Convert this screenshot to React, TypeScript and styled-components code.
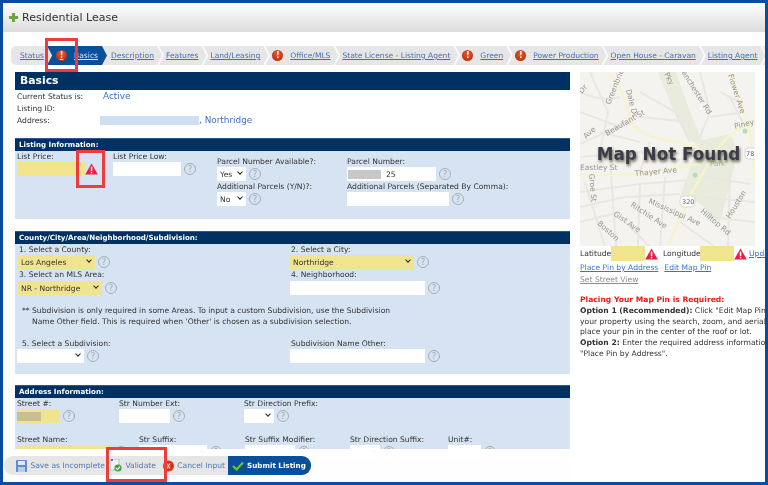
import * as React from 'react';
import styled, { createGlobalStyle } from 'styled-components';

const Global = createGlobalStyle`
  html, body { margin: 0; padding: 0; background: #fff; }
  body { font-family: "DejaVu Sans", Verdana, sans-serif; font-size: 7.6px; color: #333; }
`;

const Frame = styled.div`
  position: relative;
  box-sizing: border-box;
  width: 768px;
  height: 485px;
  overflow: hidden;
  background: #fff;
  border: 3px solid #0a4da0;
  filter: blur(0.35px);
`;

const Header = styled.div`
  display: flex;
  align-items: center;
  gap: 4px;
  height: 29px;
  padding-left: 6px;
  background: linear-gradient(#fefefe, #dcdcdc);
`;

const Title = styled.div`
  font-size: 11px;
  color: #333;
`;

const Tabs = styled.div`
  display: flex;
  align-items: center;
  height: 19px;
  margin: 14px 0 0 8px;
  background: #e6e6e6;
  border-radius: 5px 0 0 5px;
  white-space: nowrap;
`;

const Tab = styled.a<{ $active?: boolean }>`
  position: relative;
  display: flex;
  align-items: center;
  gap: 7px;
  height: 19px;
  padding: 0 ${p => (p.$active ? '9px' : '6px')};
  margin: 0 ${p => (p.$active ? '-2px' : '0')} 0 ${p => (p.$active ? '-3px' : '0')};
  font-size: 7.55px;
  color: ${p => (p.$active ? '#d8e6f8' : '#3f6fb8')};
  text-decoration: underline;
  background: ${p => (p.$active ? '#0a4f9a' : 'transparent')};
  clip-path: ${p =>
    p.$active ? 'polygon(0 0, calc(100% - 5px) 0, 100% 50%, calc(100% - 5px) 100%, 0 100%, 5px 50%)' : 'none'};
  &:first-child { margin-left: 3px; }
  &::after {
    content: ${p => (p.$active ? 'none' : '""')};
    position: absolute;
    top: 0;
    right: -4px;
    width: 7px;
    height: 19px;
    background: #fbfbfb;
    clip-path: polygon(0 0, 2px 0, 7px 50%, 2px 100%, 0 100%, 5px 50%);
  }
`;

const AlertDot = styled.span`
  display: inline-flex;
  align-items: center;
  justify-content: center;
  width: 11px;
  height: 11px;
  border-radius: 50%;
  background: radial-gradient(circle at 50% 35%, #e85a30, #a8200c);
  color: #fff;
  font-size: 8px;
  font-weight: bold;
  line-height: 1;
`;

const Content = styled.div`
  display: flex;
  gap: 10px;
  margin: 7px 0 0 12px;
`;

const Main = styled.div`
  flex: none;
  width: 555px;
`;

const Side = styled.div`
  flex: none;
  width: 190px;
`;

const PageHeading = styled.div`
  height: 18px;
  line-height: 18px;
  padding-left: 5px;
  background: #003163;
  color: #fff;
  font-size: 10.8px;
  font-weight: bold;
`;

const InfoRow = styled.div`
  display: flex;
  align-items: center;
  height: 12px;
  padding-left: 2px;
`;

const InfoLabel = styled.div`
  width: 86px;
`;

const InfoValue = styled.div`
  font-size: 8.9px;
  color: #3a6fc4;
`;

const Redacted = styled.span<{ $w: number; $color: string; $shift?: number }>`
  display: inline-block;
  flex: none;
  width: ${p => p.$w}px;
  height: 9px;
  margin-left: ${p => p.$shift ?? 0}px;
  vertical-align: middle;
  background: ${p => p.$color};
`;

const Panel = styled.section<{ $top: number }>`
  margin-top: ${p => p.$top}px;
`;

const PanelHead = styled.div`
  height: 12px;
  line-height: 12px;
  padding-left: 4px;
  background: #003163;
  border-top: 1px solid #2a5a8c;
  color: #fff;
  font-size: 7.1px;
  font-weight: bold;
`;

const PanelBody = styled.div<{ $pb: number }>`
  padding: 0 0 ${p => p.$pb}px 2px;
  background: #d6e3f3;
`;

const Columns = styled.div<{ $top?: number }>`
  display: flex;
  margin-top: ${p => p.$top ?? 0}px;
`;

const Col = styled.div<{ $w?: number; $top?: number }>`
  flex: none;
  width: ${p => (p.$w ? `${p.$w}px` : 'auto')};
  padding-top: ${p => p.$top ?? 0}px;
`;

const Label = styled.div<{ $indent?: number; $h?: number }>`
  height: ${p => p.$h ?? 11}px;
  line-height: ${p => p.$h ?? 11}px;
  padding-left: ${p => p.$indent ?? 0}px;
  white-space: nowrap;
`;

const Control = styled.div<{ $indent?: number }>`
  display: flex;
  align-items: center;
  height: 14px;
  padding-left: ${p => p.$indent ?? 0}px;
`;

const Input = styled.div<{ $w: number; $req?: boolean }>`
  display: flex;
  align-items: center;
  gap: 5px;
  box-sizing: border-box;
  flex: none;
  width: ${p => p.$w}px;
  height: 14px;
  background: ${p => (p.$req ? '#f0e48e' : '#fff')};
`;

const SelectBox = styled.div<{ $w: number; $req?: boolean }>`
  position: relative;
  flex: none;
  width: ${p => p.$w}px;
  height: 14px;
  background: ${p => (p.$req ? '#f0e48e' : '#fff')};
  &::after {
    content: "";
    position: absolute;
    top: 3px;
    right: 4px;
    width: 3px;
    height: 3px;
    border-right: 1.5px solid #222;
    border-bottom: 1.5px solid #222;
    transform: rotate(45deg);
    pointer-events: none;
  }
`;

const NativeSelect = styled.select`
  display: block;
  appearance: none;
  box-sizing: border-box;
  width: 100%;
  height: 14px;
  padding: 0 0 0 3px;
  border: none;
  border-radius: 0;
  outline: none;
  font-family: inherit;
  font-size: 7.6px;
  color: #333;
  background: transparent;
`;

const Help = styled.span`
  display: inline-flex;
  align-items: center;
  justify-content: center;
  box-sizing: border-box;
  flex: none;
  width: 12px;
  height: 12px;
  margin-left: 3px;
  border: 1px solid #a9aeb2;
  border-radius: 50%;
  color: #a3a9ad;
  font-size: 8.5px;
  line-height: 1;
`;

const SplitRow = styled.div`
  display: grid;
  grid-template-columns: 272px 1fr;
`;

const Note = styled.div`
  margin: 10px 0 11px 5px;
  line-height: 11px;
  white-space: nowrap;
`;

const NoteIndent = styled.div`
  padding-left: 10px;
`;

const MapBox = styled.div`
  position: relative;
  width: 175px;
  height: 174px;
  overflow: hidden;
  background: #f5f3ef;
`;

const MapLabel = styled.div`
  position: absolute;
  top: 72px;
  left: 2px;
  right: 0;
  text-align: center;
  white-space: nowrap;
  font-size: 16.8px;
  font-weight: bold;
  color: #3c3c48;
  text-shadow: 1px 2px 3px rgba(60, 60, 40, 0.8);
`;

const CoordRow = styled.div`
  display: flex;
  align-items: center;
  height: 15px;
  white-space: nowrap;
`;

const CoordBox = styled.div`
  flex: none;
  width: 34px;
  height: 15px;
  background: #f0e48e;
`;

const Triangle = styled.svg`
  flex: none;
  width: 13px;
  height: 12px;
`;

const CoordCaption = styled.span<{ $w: number }>`
  flex: none;
  width: ${p => p.$w}px;
`;

const PinLinks = styled.div`
  display: flex;
  gap: 6px;
  margin-top: 1px;
  line-height: 11px;
`;

const PinLink = styled.a<{ $muted?: boolean }>`
  color: ${p => (p.$muted ? '#8d8d8d' : '#3f74c4')};
  text-decoration: underline;
  white-space: nowrap;
`;

const Instructions = styled.div`
  margin-top: 10px;
  line-height: 10.8px;
  white-space: nowrap;
`;

const Required = styled.div`
  color: #f01818;
  font-weight: bold;
`;

const Footer = styled.div`
  position: absolute;
  left: 0;
  right: 0;
  bottom: 0;
  height: 33px;
  display: flex;
  align-items: center;
  padding-left: 1px;
  background: rgba(255, 255, 255, 0.97);
`;

const FootBar = styled.div`
  display: flex;
  align-items: stretch;
  height: 19px;
  border-radius: 9px;
  overflow: hidden;
  background: #e6e6e6;
`;

const FootButton = styled.div<{ $primary?: boolean; $w: number }>`
  display: flex;
  align-items: center;
  gap: 3px;
  box-sizing: border-box;
  width: ${p => p.$w}px;
  margin-left: ${p => (p.$primary ? 3 : 0)}px;
  padding-left: ${p => (p.$primary ? 4 : 0)}px;
  color: ${p => (p.$primary ? '#fff' : '#4f78b4')};
  background: ${p => (p.$primary ? '#0a4f9a' : 'transparent')};
  font-size: ${p => (p.$primary ? 7.2 : 7.6)}px;
  font-weight: ${p => (p.$primary ? 'bold' : 'normal')};
  white-space: nowrap;
  justify-content: ${p => (p.$primary ? 'flex-start' : 'flex-end')};
`;

const Marker = styled.div<{ $x: number; $y: number; $w: number; $h: number }>`
  position: absolute;
  left: ${p => p.$x - 3}px;
  top: ${p => p.$y - 3}px;
  width: ${p => p.$w}px;
  height: ${p => p.$h}px;
  box-sizing: border-box;
  border: 3px solid #ee3c3c;
`;

const FaintLabel = styled.div`
  margin: 9px 0 0 320px;
  color: #ccc;
`;

const AlertTriangle = () => (
  <Triangle viewBox="0 0 13 12">
    <path d="M6.5 .5 L12.8 11.5 H.2 Z" fill="#ec1b45" />
    <rect x="5.8" y="3.6" width="1.5" height="4.4" fill="#fff" />
    <rect x="5.8" y="8.8" width="1.5" height="1.5" fill="#fff" />
  </Triangle>
);

const Dropdown = ({ w, req, value = '' }: { w: number; req?: boolean; value?: string }) => (
  <SelectBox $w={w} $req={req}>
    <NativeSelect defaultValue={value}>
      <option>{value}</option>
    </NativeSelect>
  </SelectBox>
);

const roads = [
  'M0 20 Q20 30 40 25', 'M0 40 L40 55', 'M0 72 L48 50', 'M10 0 L28 40 L20 80', 'M60 20 L95 40 L110 70',
  'M60 45 L110 50', 'M120 0 L130 40 L118 70', 'M140 20 L160 30', 'M130 45 L165 40', 'M0 85 L60 80 L100 88',
  'M30 85 L36 175', 'M0 120 L60 112 L110 108', 'M0 135 L45 125 L100 122', 'M60 112 L58 175', 'M85 105 L80 175',
  'M0 150 L40 140', 'M125 105 L170 112', 'M120 125 L175 130', 'M130 145 L175 150', 'M150 100 L148 175',
  'M100 150 L135 175', 'M45 150 L70 175', 'M165 55 L150 25', 'M20 60 L60 70', 'M5 110 L25 175', 'M70 70 L60 100',
];

const streets: [string, number, number, number][] = [
  ['Dale Dr', 46, 18, 76], ['Greenbrier', 30, 33, -68], ['Beaufant St', 27, 64, -30], ['Ave', 6, 67, -42],
  ['Eastley St', 0, 98, 0], ['Thayer Ave', 55, 104, -5], ['Groe St', 9, 102, 85], ['Mississippi Ave', 68, 131, 24],
  ['Ritchie Ave', 50, 134, 33], ['Gist Ave', 33, 143, 35], ['Boston', 17, 152, 42], ['Hilltop Rd', 120, 140, 40],
  ['Houston', 150, 147, -58], ['Flower Ave', 148, 3, 72], ['Manchester Rd', 98, -5, 58], ['Pky', 84, 2, 62],
  ['Piney', 155, 57, -14], ['Dr', 2, 22, -50],
];

const MapDrawing = () => (
  <svg width="175" height="174" viewBox="0 0 175 174">
    <path d="M78 0 L96 0 L110 40 L122 68 L150 62 L158 78 L148 120 L140 150 L118 130 L100 125 L112 90 L122 78 L105 62 L92 35 Z" fill="#e9ecdc" />
    {roads.map(d => <path key={d} d={d} fill="none" stroke="#eae7e3" strokeWidth="2" />)}
    <g fill="none" stroke="#f7f4c8" strokeWidth="2.2">
      <path d="M28 0 Q46 20 50 48 Q58 66 100 70 L124 80" />
      <path d="M0 104 L60 102 L120 92" />
      <path d="M175 50 Q150 58 135 80 L112 120 L88 174" />
      <path d="M150 0 L170 60 L175 110" />
    </g>
    {streets.map(([t, x, y, r]) => (
      <text key={t} x={x} y={y} transform={`rotate(${r} ${x} ${y})`} fontSize="7.5" fill="#96968f" fontFamily="DejaVu Sans">{t}</text>
    ))}
    <text x="130" y="94" fontSize="7" fill="#a3b58c" fontFamily="DejaVu Sans">Park</text>
    <circle cx="115" cy="103" r="2.5" fill="#b6dcbc" />
    <circle cx="165" cy="59" r="2.5" fill="#b6dcbc" />
    <rect x="100" y="124" width="15" height="11" rx="4" fill="#fff" stroke="#c4c4c4" strokeWidth=".6" />
    <text x="102" y="132" fontSize="6.5" fill="#666" fontFamily="DejaVu Sans">320</text>
    <rect x="165" y="76" width="15" height="11" rx="3" fill="#fff" stroke="#c4c4c4" strokeWidth=".6" />
    <text x="166" y="84" fontSize="6.5" fill="#666" fontFamily="DejaVu Sans">787</text>
  </svg>
);

const PlusIcon = () => (
  <svg width="9" height="9" viewBox="0 0 9 9">
    <path d="M3 0 H6 V3 H9 V6 H6 V9 H3 V6 H0 V3 H3 Z" fill="#6da53c" />
  </svg>
);

const SaveIcon = () => (
  <svg width="11" height="12" viewBox="0 0 11 12">
    <rect width="11" height="12" rx="1" fill="#5f8dc8" />
    <rect x="2" y="1" width="7" height="4" fill="#dfeaf6" />
    <rect x="2" y="7" width="7" height="5" fill="#b9cde6" />
  </svg>
);

const ValidateIcon = () => (
  <svg width="12" height="13" viewBox="0 0 12 13">
    <rect x="0" y="0" width="9" height="11" fill="#f2f2f2" stroke="#aaa" strokeWidth=".7" />
    <rect x="1" y="0" width="2" height="2" fill="#4f78b4" />
    <circle cx="8" cy="9" r="3.6" fill="#3aa53a" />
    <path d="M6 9 L7.6 10.6 L10 7.6" fill="none" stroke="#fff" strokeWidth="1.1" />
  </svg>
);

const CancelIcon = () => (
  <svg width="11" height="12" viewBox="0 0 11 12">
    <circle cx="5.5" cy="6" r="5.5" fill="#d2361c" />
    <path d="M4 3.5 L7 8.5 M7 3.5 L4 8.5" stroke="#f6d5a8" strokeWidth="1.2" />
  </svg>
);

const CheckIcon = () => (
  <svg width="12" height="10" viewBox="0 0 12 10">
    <path d="M1 5 L4.5 8.5 L11 1.5" fill="none" stroke="#6fbf3a" strokeWidth="2.2" />
  </svg>
);

const tabs = [
  { name: 'Status' },
  { name: 'Basics', alert: true, active: true },
  { name: 'Description' },
  { name: 'Features' },
  { name: 'Land/Leasing' },
  { name: 'Office/MLS', alert: true },
  { name: 'State License - Listing Agent' },
  { name: 'Green', alert: true },
  { name: 'Power Production', alert: true },
  { name: 'Open House - Caravan' },
  { name: 'Listing Agent' },
];

const App = () => (
  <>
    <Global />
    <Frame>
      <Header>
        <PlusIcon />
        <Title>Residential Lease</Title>
      </Header>

      <Tabs>
        {tabs.map(t => (
          <Tab key={t.name} $active={t.active}>
            {t.alert && <AlertDot>!</AlertDot>}
            {t.name}
          </Tab>
        ))}
      </Tabs>

      <Content>
        <Main>
          <PageHeading>Basics</PageHeading>
          <InfoRow>
            <InfoLabel>Current Status is:</InfoLabel>
            <InfoValue>Active</InfoValue>
          </InfoRow>
          <InfoRow>
            <InfoLabel>Listing ID:</InfoLabel>
          </InfoRow>
          <InfoRow>
            <InfoLabel>Address:</InfoLabel>
            <InfoValue>
              <Redacted $w={99} $color="#d0def2" $shift={-3} />, Northridge
            </InfoValue>
          </InfoRow>

          <Panel $top={12}>
            <PanelHead>Listing Information:</PanelHead>
            <PanelBody $pb={13}>
              <Columns>
                <Col $w={96} $top={0}>
                  <Label>List Price:</Label>
                  <Control>
                    <Input $w={68} $req />
                    <AlertTriangle />
                  </Control>
                </Col>
                <Col $w={104} $top={0}>
                  <Label>List Price Low:</Label>
                  <Control>
                    <Input $w={68} />
                    <Help>?</Help>
                  </Control>
                </Col>
                <Col $w={130} $top={5}>
                  <Label>Parcel Number Available?:</Label>
                  <Control>
                    <Dropdown w={29} value="Yes" />
                    <Help>?</Help>
                  </Control>
                  <Label>Additional Parcels (Y/N)?:</Label>
                  <Control>
                    <Dropdown w={29} value="No" />
                    <Help>?</Help>
                  </Control>
                </Col>
                <Col $top={5}>
                  <Label>Parcel Number:</Label>
                  <Control>
                    <Input $w={89}>
                      <Redacted $w={33} $color="#c8c8c8" $shift={1} />
                      <span>25</span>
                    </Input>
                    <Help>?</Help>
                  </Control>
                  <Label>Additional Parcels (Separated By Comma):</Label>
                  <Control>
                    <Input $w={102} />
                    <Help>?</Help>
                  </Control>
                </Col>
              </Columns>
            </PanelBody>
          </Panel>

          <Panel $top={12}>
            <PanelHead>County/City/Area/Neighborhood/Subdivision:</PanelHead>
            <PanelBody $pb={11}>
              <SplitRow>
                <Col>
                  <Label $indent={2}>1. Select a County:</Label>
                  <Control $indent={1}>
                    <Dropdown w={77} req value="Los Angeles" />
                    <Help>?</Help>
                  </Control>
                  <Label $indent={2} $h={12}>3. Select an MLS Area:</Label>
                  <Control $indent={1}>
                    <Dropdown w={84} req value="NR - Northridge" />
                    <Help>?</Help>
                  </Control>
                </Col>
                <Col>
                  <Label $indent={2}>2. Select a City:</Label>
                  <Control $indent={1}>
                    <Dropdown w={124} req value="Northridge" />
                    <Help>?</Help>
                  </Control>
                  <Label $indent={2} $h={12}>4. Neighborhood:</Label>
                  <Control $indent={1}>
                    <Input $w={135} />
                    <Help>?</Help>
                  </Control>
                </Col>
              </SplitRow>
              <Note>
                ** Subdivision is only required in some Areas. To input a custom Subdivision, use the Subdivision
                <NoteIndent>Name Other field. This is required when 'Other' is chosen as a subdivision selection.</NoteIndent>
              </Note>
              <SplitRow>
                <Col>
                  <Label $indent={5}>5. Select a Subdivision:</Label>
                  <Control>
                    <Dropdown w={67} />
                    <Help>?</Help>
                  </Control>
                </Col>
                <Col>
                  <Label $indent={2}>Subdivision Name Other:</Label>
                  <Control $indent={1}>
                    <Input $w={135} />
                    <Help>?</Help>
                  </Control>
                </Col>
              </SplitRow>
            </PanelBody>
          </Panel>

          <Panel $top={11}>
            <PanelHead>Address Information:</PanelHead>
            <PanelBody $pb={11}>
              <Columns>
                <Col $w={102}>
                  <Label>Street #:</Label>
                  <Control>
                    <Input $w={43} $req>
                      <Redacted $w={24} $color="#c9c08f" />
                    </Input>
                    <Help>?</Help>
                  </Control>
                </Col>
                <Col $w={125}>
                  <Label>Str Number Ext:</Label>
                  <Control>
                    <Input $w={51} />
                    <Help>?</Help>
                  </Control>
                </Col>
                <Col>
                  <Label>Str Direction Prefix:</Label>
                  <Control>
                    <Dropdown w={30} />
                    <Help>?</Help>
                  </Control>
                </Col>
              </Columns>
              <Columns $top={11}>
                <Col $w={122}>
                  <Label>Street Name:</Label>
                  <Control>
                    <Input $w={95} $req />
                    <Help>?</Help>
                  </Control>
                </Col>
                <Col $w={106}>
                  <Label>Str Suffix:</Label>
                  <Control>
                    <Dropdown w={68} />
                    <Help>?</Help>
                  </Control>
                </Col>
                <Col $w={105}>
                  <Label>Str Suffix Modifier:</Label>
                  <Control>
                    <Input $w={50} />
                    <Help>?</Help>
                  </Control>
                </Col>
                <Col $w={98}>
                  <Label>Str Direction Suffix:</Label>
                  <Control>
                    <Dropdown w={30} />
                    <Help>?</Help>
                  </Control>
                </Col>
                <Col>
                  <Label>Unit#:</Label>
                  <Control>
                    <Input $w={33} />
                    <Help>?</Help>
                  </Control>
                </Col>
              </Columns>
              <FaintLabel>Postal Code +4:</FaintLabel>
            </PanelBody>
          </Panel>
        </Main>

        <Side>
          <MapBox>
            <MapDrawing />
            <MapLabel>Map Not Found</MapLabel>
          </MapBox>
          <CoordRow>
            <CoordCaption $w={31}>Latitude</CoordCaption>
            <CoordBox />
            <AlertTriangle />
            <CoordCaption $w={5} />
            <CoordCaption $w={37}>Longitude</CoordCaption>
            <CoordBox />
            <AlertTriangle />
            <CoordCaption $w={2} />
            <PinLink>Update</PinLink>
          </CoordRow>
          <PinLinks>
            <PinLink>Place Pin by Address</PinLink>
            <PinLink>Edit Map Pin</PinLink>
          </PinLinks>
          <PinLinks>
            <PinLink $muted>Set Street View</PinLink>
          </PinLinks>
          <Instructions>
            <Required>Placing Your Map Pin is Required:</Required>
            <div><b>Option 1 (Recommended):</b> Click "Edit Map Pin" to locate</div>
            <div>your property using the search, zoom, and aerial views, then</div>
            <div>place your pin in the center of the roof or lot.</div>
            <div><b>Option 2:</b> Enter the required address information, then click</div>
            <div>"Place Pin by Address".</div>
          </Instructions>
        </Side>
      </Content>

      <Footer>
        <FootBar>
          <FootButton $w={101}><SaveIcon />Save as Incomplete</FootButton>
          <FootButton $w={51}><ValidateIcon />Validate</FootButton>
          <FootButton $w={69}><CancelIcon />Cancel Input</FootButton>
          <FootButton $w={83} $primary><CheckIcon />Submit Listing</FootButton>
        </FootBar>
      </Footer>

      <Marker $x={45} $y={38} $w={33} $h={34} />
      <Marker $x={76} $y={150} $w={29} $h={38} />
      <Marker $x={106} $y={447} $w={61} $h={35} />
    </Frame>
  </>
);

export default App;
